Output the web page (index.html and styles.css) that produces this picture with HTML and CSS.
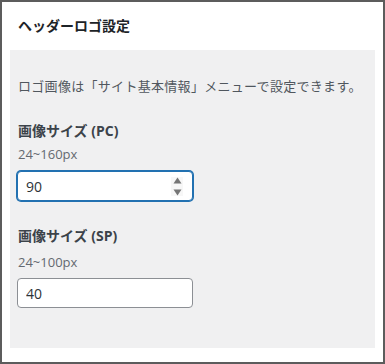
FILE: index.html
```html
<!DOCTYPE html>
<html lang="ja">
<head>
    <meta charset="UTF-8">
    <meta name="viewport" content="width=device-width, initial-scale=1.0">
    <title>ヘッダーロゴ設定</title>
    <link rel="stylesheet" href="styles.css">
</head>
<body>
    <div class="kutu">
        <h3 class="baslik">ヘッダーロゴ設定</h3>
        <div class="panel">
            <p class="aciklama">ロゴ画像は「サイト基本情報」メニューで設定できます。</p>

            <div class="ayar">
                <span class="etiket">画像サイズ (PC)</span>
                <span class="ipucu">24~160px</span>
                <div class="alan odak">
                    <input type="text" value="90">
                    <div class="oklar">
                        <svg width="9" height="7" viewBox="0 0 9 7"><path d="M4.5 0.5 L8.5 6.5 L0.5 6.5 Z" fill="#757575"/></svg>
                        <svg width="9" height="7" viewBox="0 0 9 7"><path d="M0.5 0.5 L8.5 0.5 L4.5 6.5 Z" fill="#757575"/></svg>
                    </div>
                </div>
            </div>

            <div class="ayar">
                <span class="etiket">画像サイズ (SP)</span>
                <span class="ipucu ikinci">24~100px</span>
                <div class="alan">
                    <input type="text" value="40">
                </div>
            </div>
        </div>
    </div>
</body>
</html>
```

FILE: styles.css
```css
* {
    box-sizing: border-box;
    font-family: "Open Sans", "Noto Sans CJK JP", sans-serif;
}

body {
    margin: 0;
    background: #ffffff;
}

.kutu {
    width: 385px;
    height: 364px;
    border: 2px solid #5c5c5c;
    background: #ffffff;
    padding: 0 8px;
}

.baslik {
    margin: 0;
    padding: 14px 0 0 8px;
    height: 48px;
    font-size: 14px;
    line-height: 20px;
    font-weight: 700;
    color: #1d2327;
}

.panel {
    background: #f0f0f1;
    height: 298px;
    padding: 26px 8px 0 8px;
}

.aciklama {
    margin: 0;
    font-size: 13px;
    line-height: 20px;
    letter-spacing: 0.3px;
    color: #50575e;
}

.ayar {
    display: flex;
    flex-direction: column;
    margin-top: 25px;
}

.etiket {
    font-size: 14px;
    line-height: 20px;
    font-weight: 700;
    color: #3c434a;
}

.ipucu {
    margin-top: 3px;
    font-size: 13px;
    line-height: 20px;
    color: #646970;
}

.ipucu.ikinci {
    margin-top: 6px;
}

.alan {
    position: relative;
    width: 176px;
    height: 30px;
    margin: 6px 0 0 -1px;
    background: #ffffff;
    border: 1px solid #8c8f94;
    border-radius: 4px;
}

.alan.odak {
    margin-top: 7px;
    border-color: #2271b1;
    box-shadow: 0 0 0 1px #2271b1;
}

.alan input {
    width: 100%;
    height: 100%;
    border: none;
    outline: none;
    background: transparent;
    padding: 0 8px;
    font-size: 14px;
    color: #2c3338;
}

.oklar {
    position: absolute;
    right: 9px;
    top: 5px;
    width: 12px;
    height: 19px;
    background: #f7f7f7;
    display: flex;
    flex-direction: column;
    justify-content: space-between;
    align-items: center;
    padding: 0;
}

.oklar svg {
    display: block;
}
```
